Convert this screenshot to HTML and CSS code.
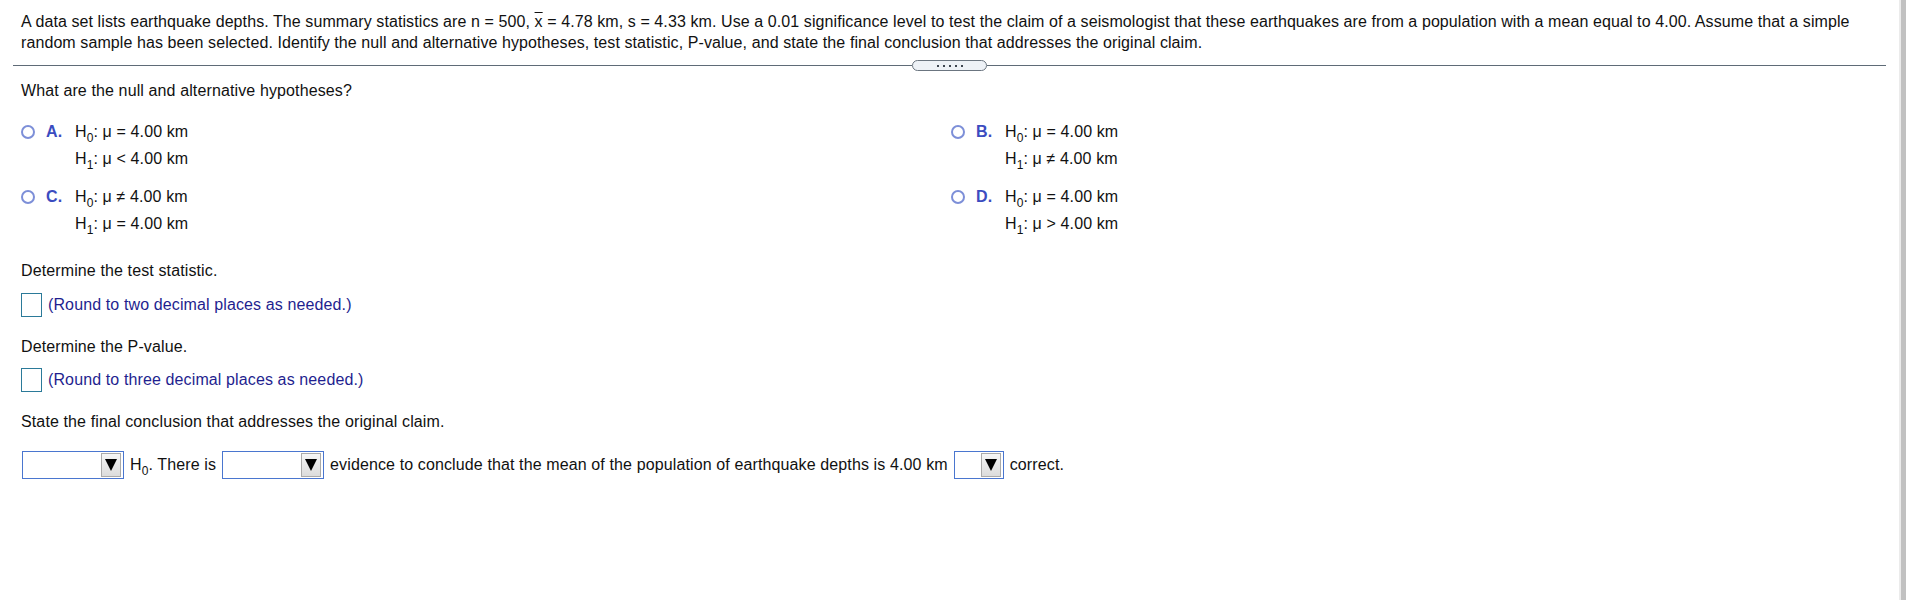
FILE: index.html
```
<!DOCTYPE html>
<html lang="en">
<head>
    <meta charset="UTF-8">
    <title>Hypothesis Test</title>
    <link rel="stylesheet" href="styles.css">
</head>
<body>
    <div class="page">
        <div class="main">
            <p class="stem">A data set lists earthquake depths. The summary statistics are n&nbsp;=&nbsp;500, <span class="xbar">x</span>&nbsp;=&nbsp;4.78 km, s&nbsp;=&nbsp;4.33 km. Use a 0.01 significance level to test the claim of a seismologist that these earthquakes are from a population with a mean equal to 4.00. Assume that a simple random sample has been selected. Identify the null and alternative hypotheses, test statistic, P-value, and state the final conclusion that addresses the original claim.</p>

            <div class="divider"><span class="more"><i></i><i></i><i></i><i></i><i></i></span></div>

            <p class="prompt first">What are the null and alternative hypotheses?</p>

            <div class="choices">
                <div class="choice">
                    <span class="radio"></span>
                    <span class="letter">A.</span>
                    <div class="hyp">
                        <div>H<sub>0</sub>: μ = 4.00 km</div>
                        <div>H<sub>1</sub>: μ &lt; 4.00 km</div>
                    </div>
                </div>
                <div class="choice">
                    <span class="radio"></span>
                    <span class="letter">B.</span>
                    <div class="hyp">
                        <div>H<sub>0</sub>: μ = 4.00 km</div>
                        <div>H<sub>1</sub>: μ ≠ 4.00 km</div>
                    </div>
                </div>
                <div class="choice">
                    <span class="radio"></span>
                    <span class="letter">C.</span>
                    <div class="hyp">
                        <div>H<sub>0</sub>: μ ≠ 4.00 km</div>
                        <div>H<sub>1</sub>: μ = 4.00 km</div>
                    </div>
                </div>
                <div class="choice">
                    <span class="radio"></span>
                    <span class="letter">D.</span>
                    <div class="hyp">
                        <div>H<sub>0</sub>: μ = 4.00 km</div>
                        <div>H<sub>1</sub>: μ &gt; 4.00 km</div>
                    </div>
                </div>
            </div>

            <p class="prompt step">Determine the test statistic.</p>
            <div class="answer">
                <span class="box"></span>
                <span class="hint">(Round to two decimal places as needed.)</span>
            </div>

            <p class="prompt next">Determine the P-value.</p>
            <div class="answer">
                <span class="box"></span>
                <span class="hint">(Round to three decimal places as needed.)</span>
            </div>

            <p class="prompt next">State the final conclusion that addresses the original claim.</p>
            <div class="conclusion">
                <span class="dropdown"><span class="arrow"></span></span>
                <span>H<sub>0</sub>. There is</span>
                <span class="dropdown"><span class="arrow"></span></span>
                <span>evidence to conclude that the mean of the population of earthquake depths is 4.00 km</span>
                <span class="dropdown small"><span class="arrow"></span></span>
                <span>correct.</span>
            </div>
        </div>
        <div class="scrollbar"></div>
    </div>
</body>
</html>
```

FILE: styles.css
```
body {
    margin: 0;
    font-family: "Liberation Sans", Arial, Helvetica, sans-serif;
    font-size: 16px;
    letter-spacing: 0.12px;
    color: #111;
    background-color: #fff;
}

.page {
    display: flex;
    min-height: 100vh;
}

.main {
    flex: 1;
    padding: 12px 13px 0;
}

.scrollbar {
    width: 5px;
    border-left: 2px solid #ebebeb;
    background-color: #c1c1c1;
}

.stem {
    margin: 0;
    padding: 0 8px;
    line-height: 20.5px;
    letter-spacing: 0.09px;
}

.xbar {
    text-decoration: overline;
}

sub {
    font-size: 12px;
    vertical-align: -5px;
    line-height: 0;
}

/* divider with the "more" pill */
.divider {
    display: flex;
    align-items: center;
    height: 11px;
    margin-top: 7px;
}
.divider::before,
.divider::after {
    content: "";
    flex: 1;
    border-top: 1px solid #5f6b77;
}
.more {
    width: 73px;
    height: 9px;
    border: 1px solid #6b7580;
    border-radius: 6px;
    background-color: #eef2f7;
    display: flex;
    justify-content: center;
    align-items: center;
    gap: 4px;
}
.more i {
    width: 2px;
    height: 2px;
    background-color: #3d4550;
}

.prompt {
    margin: 0;
    padding-left: 8px;
    line-height: 20px;
}
.prompt.first {
    margin-top: 10px;
}
.prompt.step {
    margin-top: 24px;
}
.prompt.next {
    margin-top: 20px;
}

/* answer choices */
.choices {
    display: grid;
    grid-template-columns: 930px 1fr;
    row-gap: 11px;
    margin-top: 17px;
    padding-left: 8px;
}
.choice {
    display: flex;
    align-items: flex-start;
}
.radio {
    flex: none;
    width: 10px;
    height: 10px;
    margin-top: 7px;
    border: 2px solid #7d8fd8;
    border-radius: 50%;
}
.letter {
    flex: none;
    width: 29px;
    margin-left: 11px;
    font-weight: bold;
    color: #3b4cc0;
    line-height: 27px;
}
.hyp {
    line-height: 27px;
}

/* fill-in boxes */
.answer {
    display: flex;
    align-items: center;
    gap: 6px;
    margin-top: 12px;
    padding-left: 8px;
}
.prompt.next + .answer {
    margin-top: 11px;
}
.box {
    width: 19px;
    height: 22px;
    border: 1px solid #2b7a99;
}
.hint {
    color: #1f1f8f;
}

/* conclusion sentence */
.conclusion {
    display: flex;
    align-items: center;
    gap: 6px;
    margin-top: 19px;
    padding-left: 9px;
}
.dropdown {
    width: 98px;
    height: 26px;
    padding-right: 2px;
    border: 1px solid #4a76cf;
    display: flex;
    justify-content: flex-end;
    align-items: center;
}
.dropdown.small {
    width: 46px;
}
.arrow {
    width: 18px;
    height: 22px;
    border: 1px solid #aaa;
    background: linear-gradient(#f6f6f6, #dcdcdc);
    display: flex;
    justify-content: center;
    align-items: center;
}
.arrow::after {
    content: "";
    border-left: 6px solid transparent;
    border-right: 6px solid transparent;
    border-top: 12px solid #000;
}
```
